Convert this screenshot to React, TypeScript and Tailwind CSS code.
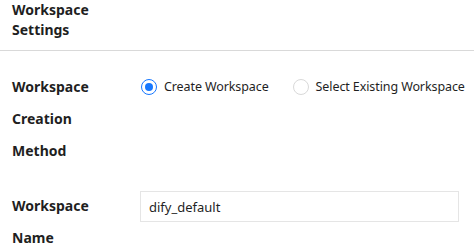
import { useState } from "react";

function Radio({ checked, label, onClick }: { checked: boolean; label: string; onClick: () => void }) {
  return (
    <label className="flex shrink-0 cursor-pointer items-center whitespace-nowrap" onClick={onClick}>
      <span
        className={
          checked
            ? "flex h-[16px] w-[16px] items-center justify-center rounded-full border border-[#1677ff] bg-white"
            : "flex h-[16px] w-[16px] items-center justify-center rounded-full border border-[#d9d9d9] bg-white"
        }
      >
        {checked && <span className="h-[8px] w-[8px] rounded-full bg-[#1677ff]" />}
      </span>
      <span className="ml-[7px] text-[12.5px] tracking-[-0.1px] text-[#1f1f1f]">{label}</span>
    </label>
  );
}

export default function App() {
  const [method, setMethod] = useState("create");
  const [name, setName] = useState("dify_default");

  return (
    <div className="h-[248px] w-[474px] overflow-hidden bg-white font-['Noto_Sans',sans-serif] text-[#1f1f1f]">
      <div className="px-[12px] pb-[10px]">
        <h2 className="w-[100px] text-[14px] font-bold leading-[20px]">Workspace Settings</h2>
      </div>
      <div className="border-t border-[#d9d9d9]" />

      <div className="mt-[20px] px-[12px]">
        <div className="flex">
          <div className="w-[100px] shrink-0 text-[14px] font-bold leading-[32px]">Workspace Creation Method</div>
          <div className="ml-[29px] flex h-[32px] shrink-0 items-center gap-[24px]">
            <Radio checked={method === "create"} label="Create Workspace" onClick={() => setMethod("create")} />
            <Radio checked={method === "select"} label="Select Existing Workspace" onClick={() => setMethod("select")} />
          </div>
        </div>

        <div className="mt-[23px] flex">
          <div className="w-[100px] shrink-0 text-[14px] font-bold leading-[32px]">Workspace Name</div>
          <div className="ml-[28px] pt-[1px]">
            <input
              value={name}
              onChange={(e) => setName(e.target.value)}
              className="h-[31px] w-[319px] border border-[#e5e5e5] px-[8px] text-[13px] text-[#1f1f1f] outline-none"
            />
          </div>
        </div>
      </div>
    </div>
  );
}
